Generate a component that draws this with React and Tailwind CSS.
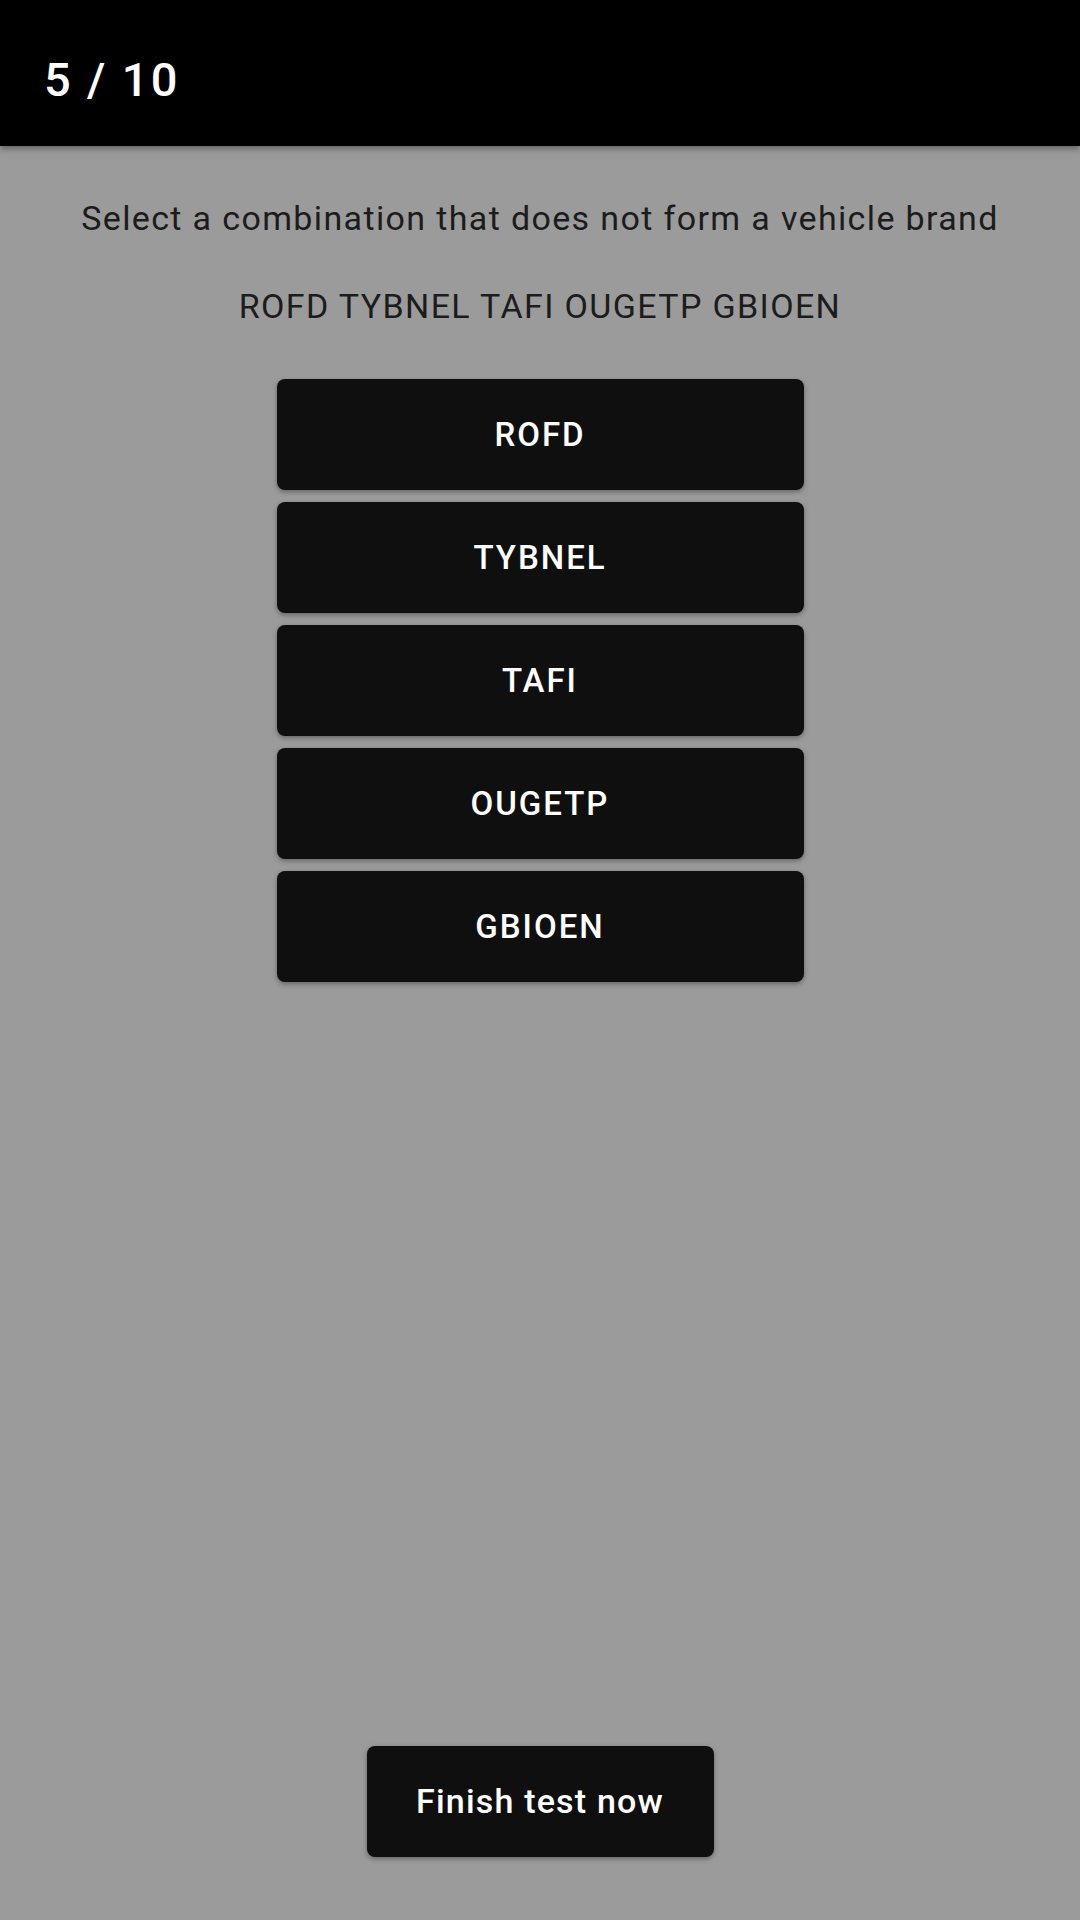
import React from "react";

const options = ["ROFD", "TYBNEL", "TAFI", "OUGETP", "GBIOEN"];

export default function App() {
  return (
    <div
      className="min-h-[1920px] w-[1080px] bg-[#9b9b9b] flex flex-col"
      style={{ fontFamily: "Roboto, 'Noto Sans', sans-serif" }}
    >
      <header className="h-[146px] bg-black flex items-center pl-[44px] pt-[14px] shadow-[0_3px_6px_rgba(0,0,0,0.35)] relative z-10">
        <span className="text-white text-[47px] leading-[52px] font-medium tracking-[0.05em]">
          5 / 10
        </span>
      </header>

      <main className="flex-1 flex flex-col items-center pt-[52px]">
        <p className="text-[#1c1c1c] text-[34px] leading-[40px] tracking-[0.04em]">
          Select a combination that does not form a vehicle brand
        </p>
        <p className="text-[#1c1c1c] text-[34px] leading-[40px] tracking-[0.04em] mt-[48px]">
          ROFD TYBNEL TAFI OUGETP GBIOEN
        </p>

        <div className="mt-[53px] flex flex-col gap-[12px] w-[527px]">
          {options.map((o) => (
            <button
              key={o}
              className="h-[111px] w-full rounded-[8px] bg-[#0f0f0f] text-white text-[33px] font-medium tracking-[0.06em] shadow-[0_2px_5px_rgba(0,0,0,0.35)] flex items-center justify-center"
            >
              {o}
            </button>
          ))}
        </div>

        <div className="mt-auto pb-[63px]">
          <button className="h-[111px] w-[347px] rounded-[8px] bg-[#0f0f0f] text-white text-[34px] font-medium tracking-[0.035em] shadow-[0_2px_5px_rgba(0,0,0,0.35)] flex items-center justify-center">
            Finish test now
          </button>
        </div>
      </main>
    </div>
  );
}
